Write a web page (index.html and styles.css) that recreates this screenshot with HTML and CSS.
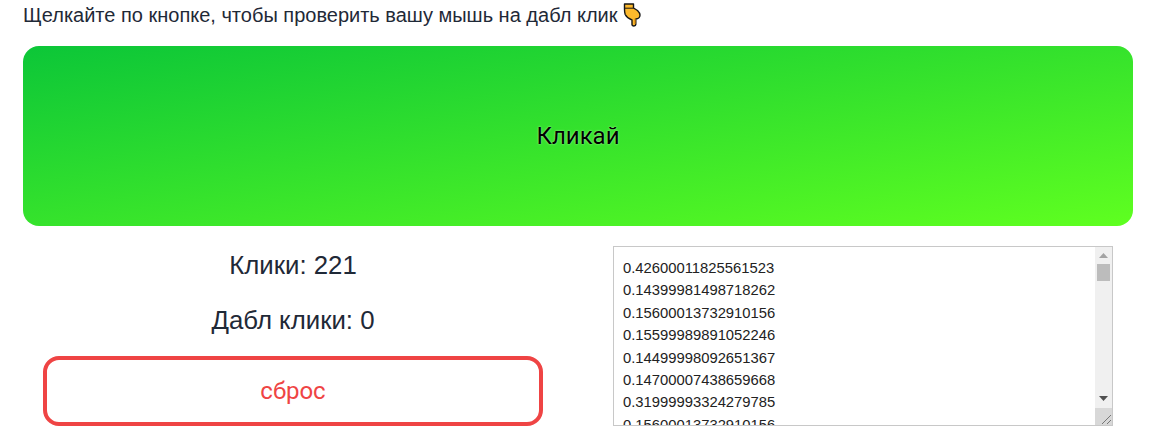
FILE: index.html
```html
<!DOCTYPE html>
<html lang="ru">
<head>
<meta charset="utf-8">
<title>Тест мыши на дабл клик</title>
<link rel="stylesheet" href="styles.css">
</head>
<body>
<main class="page">
  <p class="intro">Щелкайте по кнопке, чтобы проверить вашу мышь на дабл клик
    <svg class="hand" viewBox="0 0 18 24" width="18" height="24" aria-hidden="true">
      <path d="M1.5 1H10.5V5L14.5 7.5C16 9 17 10.5 17 12C17 14 15.5 16 12.8 16V21.5C12.8 23.4 9 23.4 9 21.5V17C6 16 3.5 14 2.2 11.5C1.6 10 1.5 8 1.5 6Z" fill="#fdb92c" stroke="#161616" stroke-width="1.4" stroke-linejoin="round"/>
      <path d="M1.8 5.2H10.5" fill="none" stroke="#161616" stroke-width="1"/>
      <path d="M12 15.5V21" fill="none" stroke="#d98a10" stroke-width="1.2"/>
    </svg>
  </p>
  <button class="click-area" type="button">Кликай</button>
  <section class="columns">
    <div class="stats">
      <p class="stat">Клики: 221</p>
      <p class="stat">Дабл клики: 0</p>
      <button class="reset" type="button">сброс</button>
    </div>
    <div class="log-col">
      <div class="log-box">
        <textarea class="log" readonly>0.42600011825561523
0.14399981498718262
0.15600013732910156
0.15599989891052246
0.14499998092651367
0.14700007438659668
0.31999993324279785
0.15600013732910156
0.14399981498718262
0.15600013732910156
0.14499998092651367
0.14700007438659668
0.31999993324279785
0.15600013732910156</textarea>
        <div class="scrollbar" aria-hidden="true">
          <svg class="arrow" viewBox="0 0 9 5" width="9" height="5"><path d="M4.5 0L9 5H0Z" fill="#a3a3a3"/></svg>
          <div class="thumb"></div>
          <svg class="arrow arrow-down" viewBox="0 0 9 5" width="9" height="5"><path d="M0 0H9L4.5 5Z" fill="#505050"/></svg>
          <div class="corner">
            <svg viewBox="0 0 17 17" width="17" height="17"><path d="M7 16L16 7M12 16L16 12" stroke="#777" stroke-width="1" fill="none"/></svg>
          </div>
        </div>
      </div>
    </div>
  </section>
</main>
</body>
</html>
```
FILE: styles.css
```css
html, body {
  margin: 0;
  padding: 0;
  background: #fff;
  overflow: hidden;
}
.page {
  box-sizing: border-box;
  width: 1140px;
  margin-left: 8px;
  padding: 0 15px;
  font-family: "Liberation Sans", Arial, sans-serif;
  color: #1f2937;
}
.intro {
  margin: 0;
  height: 46px;
  font-size: 20px;
  line-height: 26px;
  padding-top: 2px;
  box-sizing: border-box;
  white-space: nowrap;
}
.hand {
  vertical-align: -5px;
  margin-left: 0;
}
.click-area {
  display: block;
  width: 100%;
  height: 180px;
  border: 0;
  border-radius: 16px;
  padding: 0;
  background: linear-gradient(to bottom right, #0cc638 0%, #5fff20 100%);
  font-family: Roboto, sans-serif;
  font-size: 24px;
  color: #000;
  text-shadow: 0 0 2px #b5f7ae;
}
.columns {
  display: grid;
  grid-template-columns: 570px 570px;
  margin: 20px -15px 0;
}
.stats {
  display: flex;
  flex-direction: column;
  align-items: center;
}
.stat {
  margin: 0;
  height: 55px;
  font-size: 25.8px;
  line-height: 38px;
}
.reset {
  box-sizing: border-box;
  width: 500px;
  height: 70px;
  padding: 0;
  border: 4px solid #ef4444;
  border-radius: 16px;
  background: #fff;
  color: #ef4444;
  font-family: Roboto, sans-serif;
  font-size: 24px;
}
.log-col {
  display: flex;
  justify-content: center;
}
.log-box {
  position: relative;
  width: 500px;
  height: 180px;
}
.log {
  display: block;
  box-sizing: border-box;
  width: 100%;
  height: 100%;
  margin: 0;
  padding: 10px 9px;
  border: 1px solid #c8c8c8;
  font-family: "Liberation Sans", Arial, sans-serif;
  font-size: 14.8px;
  line-height: 22.4px;
  color: #222;
  background: #fff;
  outline: none;
  resize: none;
  overflow: hidden;
}
.scrollbar {
  position: absolute;
  top: 1px;
  right: 1px;
  bottom: 1px;
  width: 17px;
  background: #f0f0f0;
  display: flex;
  flex-direction: column;
  align-items: center;
}
.arrow {
  flex: none;
  margin-top: 6px;
}
.thumb {
  flex: none;
  width: 13px;
  height: 17px;
  margin-top: 6px;
  background: #bcbcbc;
}
.arrow-down {
  margin-top: auto;
  margin-bottom: 7px;
}
.corner {
  flex: none;
  width: 17px;
  height: 17px;
  background: #d8d8d8;
}
.corner svg {
  display: block;
}
```
